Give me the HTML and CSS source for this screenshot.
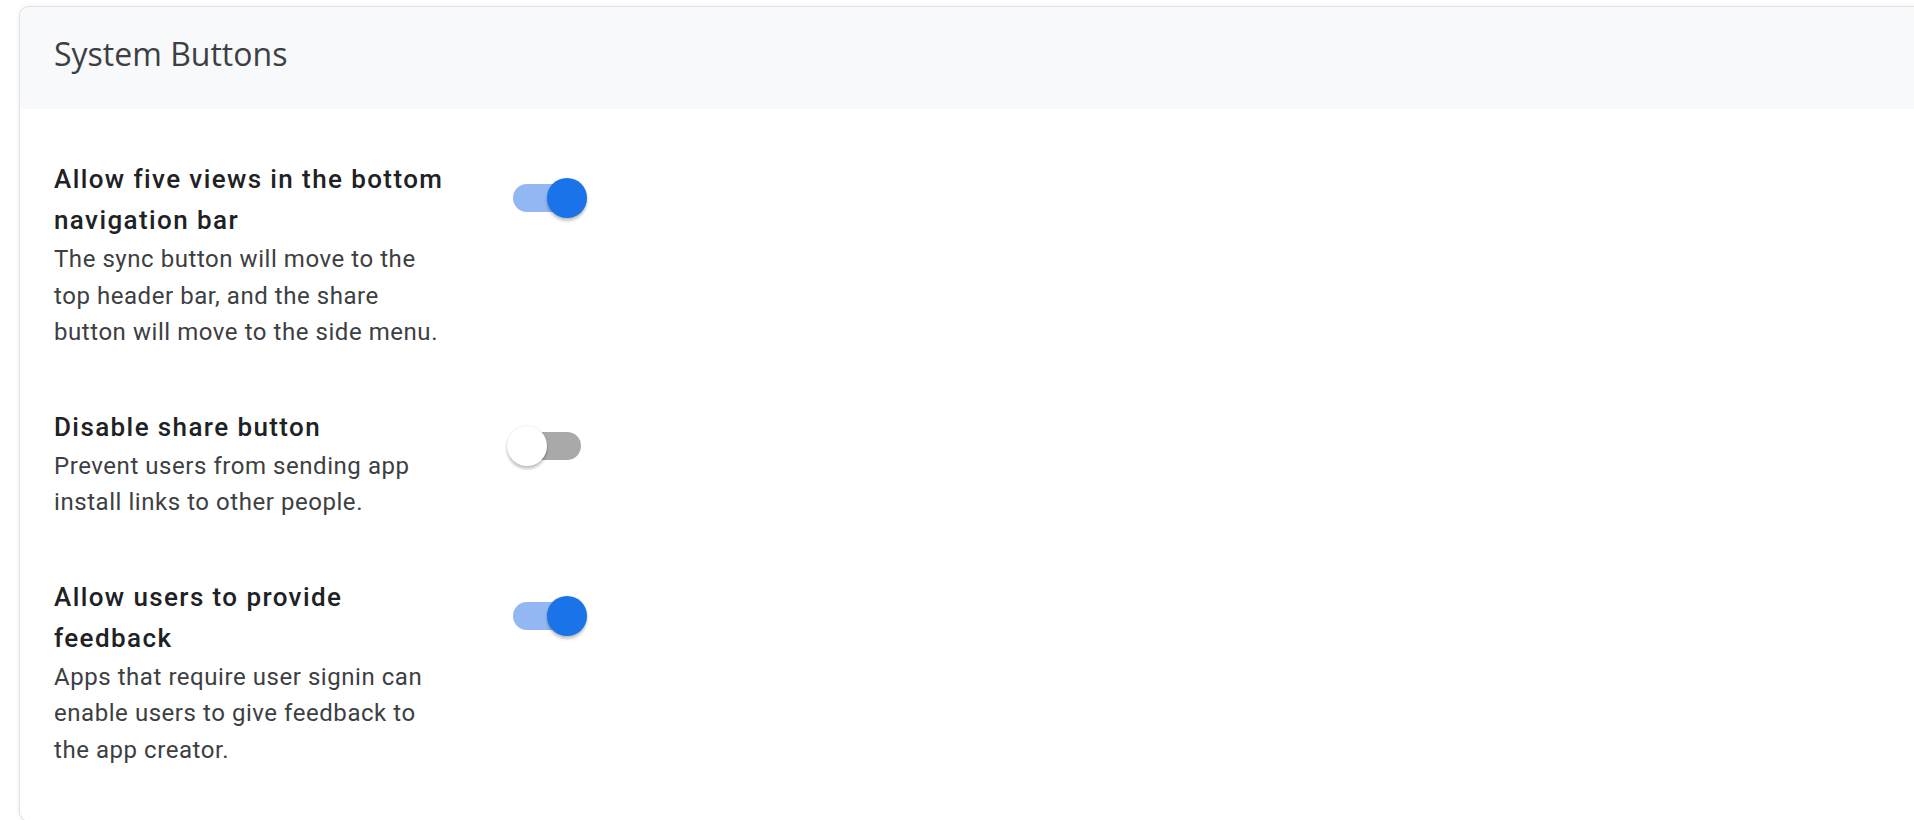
FILE: index.html
```html
<!DOCTYPE html>
<html lang="en">
<head>
<meta charset="utf-8">
<title>System Buttons</title>
<link rel="stylesheet" href="styles.css">
</head>
<body>
<section class="card">
  <header class="card-header">
    <h2 class="card-title">System Buttons</h2>
  </header>
  <div class="card-body">
    <div class="setting">
      <div class="setting-text">
        <div class="setting-title">Allow five views in the bottom navigation bar</div>
        <div class="setting-desc">The sync button will move to the top header bar, and the share button will move to the side menu.</div>
      </div>
      <div class="toggle on"><span class="track"></span><span class="thumb"></span></div>
    </div>
    <div class="setting">
      <div class="setting-text">
        <div class="setting-title">Disable share button</div>
        <div class="setting-desc">Prevent users from sending app install links to other people.</div>
      </div>
      <div class="toggle"><span class="track"></span><span class="thumb"></span></div>
    </div>
    <div class="setting">
      <div class="setting-text">
        <div class="setting-title">Allow users to provide feedback</div>
        <div class="setting-desc">Apps that require user signin can enable users to give feedback to the app creator.</div>
      </div>
      <div class="toggle on"><span class="track"></span><span class="thumb"></span></div>
    </div>
  </div>
</section>
</body>
</html>
```
FILE: styles.css
```css
html, body {
  margin: 0;
  padding: 0;
  background: #ffffff;
  overflow: hidden;
}
body {
  padding: 6px 0 0 19px;
  font-family: Roboto, "Liberation Sans", sans-serif;
}
.card {
  width: 1930px;
  height: 816px;
  box-sizing: border-box;
  border: 1px solid #dfe1e4;
  border-radius: 10px;
  box-shadow: 0 0 4px rgba(0, 0, 0, 0.08);
  background: #ffffff;
  overflow: hidden;
}
.card-header {
  background: #f8f9fa;
  height: 102px;
  box-sizing: border-box;
  padding: 27px 34px 0 34px;
}
.card-title {
  margin: 0;
  font-family: "Open Sans", Roboto, sans-serif;
  font-weight: 400;
  font-size: 32px;
  line-height: 40px;
  color: #3c4043;
}
.card-body {
  padding: 50px 34px 0 34px;
  display: flex;
  flex-direction: column;
  gap: 56px;
}
.setting {
  display: flex;
  align-items: flex-start;
}
.setting-text {
  width: 396px;
  margin-right: 57px;
}
.setting-title {
  font-size: 26px;
  font-weight: 500;
  line-height: 41px;
  color: #202124;
  letter-spacing: 1.4px;
}
.setting-desc {
  font-size: 24px;
  line-height: 36.5px;
  color: #3c4043;
  letter-spacing: 0.55px;
}
.toggle {
  position: relative;
  width: 80px;
  height: 40px;
  margin-top: 19px;
  flex: none;
}
.toggle .track {
  position: absolute;
  left: 4px;
  top: 6px;
  width: 70px;
  height: 28px;
  border-radius: 14px;
  background: #a9a9a9;
}
.toggle .thumb {
  position: absolute;
  left: 0;
  top: 0;
  width: 40px;
  height: 40px;
  border-radius: 50%;
  background: #ffffff;
  box-shadow: 0 3px 3px rgba(0, 0, 0, 0.22), 0 0 2px rgba(0, 0, 0, 0.14);
}
.toggle.on .track {
  left: 6px;
  background: #93b7f3;
}
.toggle.on .thumb {
  left: 40px;
  background: #1a73e8;
}
```
